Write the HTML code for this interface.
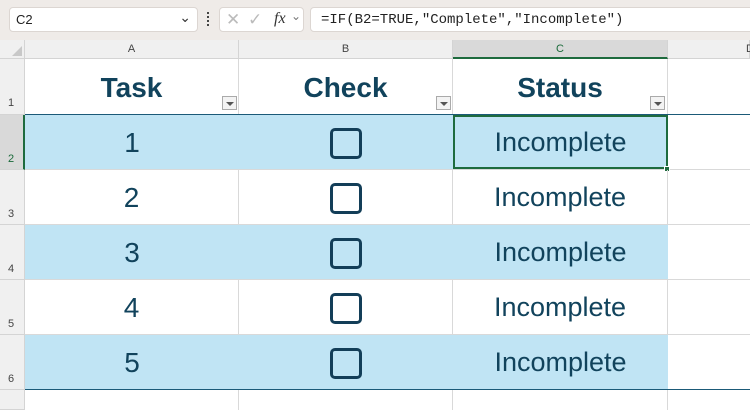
<!DOCTYPE html>
<html><head><style>
*{margin:0;padding:0;box-sizing:border-box}
body{width:750px;height:400px;overflow:hidden;background:#fff;font-family:"Liberation Sans",sans-serif;position:relative}
.top{position:absolute;left:0;top:0;width:750px;height:40px;background:#efebe8}
.box{position:absolute;background:#fff;border:1px solid #dcd6d2;border-radius:4px;height:25px;top:7px}
.abs{position:absolute}
.ch{position:absolute;top:40px;height:19px;background:#f0f0f0;border-right:1px solid #d4d4d4;border-bottom:1px solid #d4d4d4;font-size:11px;color:#444;text-align:center;line-height:19px}
.rh{position:absolute;left:0;width:25px;background:#f0f0f0;border-bottom:1px solid #d4d4d4;border-right:1px solid #d4d4d4;font-size:11px;color:#444;padding-left:8px}
.row{position:absolute;left:25px;width:725px;border-bottom:1px solid #d9d9d9}
.cell{position:absolute;top:0;height:100%;border-right:1px solid #d9d9d9;text-align:center;color:#11435c}
.cb{position:absolute;left:330px;width:32px;height:31px;border:3px solid #133e58;border-radius:5px}
.dd{position:absolute;width:15px;height:14px;border:1px solid #aaa;background:#f3f3f3}
.dd:after{content:"";position:absolute;left:3px;top:5px;border-left:4px solid transparent;border-right:4px solid transparent;border-top:4px solid #555}
</style></head><body>
<div class="top"></div>
<div class="box" style="left:9px;width:189px"><span class="abs" style="left:6px;top:4px;font-size:13px;color:#222">C2</span><span class="abs" style="right:6px;top:1px;font-size:14px;color:#333">&#8964;</span></div>
<div class="abs" style="left:207px;top:12px;width:2px;height:14px;border-left:2px dotted #444"></div>
<div class="box" style="left:219px;width:85px"><span class="abs" style="left:6px;top:2px;font-size:17px;color:#bbb">✕</span><span class="abs" style="left:28px;top:2px;font-size:17px;color:#bbb">✓</span><span class="abs" style="left:54px;top:2px;font-size:16px;font-style:italic;font-family:'Liberation Serif',serif;color:#333">fx</span><span class="abs" style="left:71px;top:1px;font-size:12px;color:#777">&#8964;</span></div>
<div class="box" style="left:310px;width:445px"><span class="abs" style="left:10px;top:4px;font-size:14px;font-family:'Liberation Mono',monospace;color:#222">=IF(B2=TRUE,"Complete","Incomplete")</span></div>

<div class="ch" style="left:0;width:25px"></div>
<div class="abs" style="left:12px;top:46px;border-left:10px solid transparent;border-bottom:10px solid #c8c8c8"></div>
<div class="ch" style="left:25px;width:214px">A</div>
<div class="ch" style="left:239px;width:214px">B</div>
<div class="ch" style="left:453px;width:215px;background:#d9d9d9;color:#1a6a3a;border-bottom:2px solid #1e6b3e">C</div>
<div class="ch" style="left:668px;width:82px;text-align:left;padding-left:78px">D</div>

<div class="rh" style="top:59px;height:56px;padding-top:38px">1</div>
<div class="rh" style="top:115px;height:55px;padding-top:38px;background:#d9d9d9;color:#1a6a3a;border-right:2px solid #1e6b3e">2</div>
<div class="rh" style="top:170px;height:55px;padding-top:38px">3</div>
<div class="rh" style="top:225px;height:55px;padding-top:38px">4</div>
<div class="rh" style="top:280px;height:55px;padding-top:38px">5</div>
<div class="rh" style="top:335px;height:55px;padding-top:38px">6</div>
<div class="rh" style="top:390px;height:20px"></div>

<div class="row" style="top:59px;height:56px;border-bottom:1px solid #1b5a78">
<div class="cell" style="left:0;width:214px;font-weight:bold;font-size:28px;line-height:58px">Task</div>
<div class="cell" style="left:214px;width:214px;font-weight:bold;font-size:28px;line-height:58px">Check</div>
<div class="cell" style="left:428px;width:215px;font-weight:bold;font-size:28px;line-height:58px">Status</div>
<div class="dd" style="left:197px;top:37px"></div><div class="dd" style="left:411px;top:37px"></div><div class="dd" style="left:625px;top:37px"></div>
</div>

<div class="row" style="top:115px;height:55px"><div class="cell" style="left:0;width:643px;background:#c0e4f4;border:none"></div><div class="cell" style="left:0;width:214px;font-size:28px;line-height:55px;border:none">1</div><div class="cell" style="left:428px;width:215px;font-size:27px;line-height:55px;border:2px solid #1e6b3e;line-height:51px">Incomplete</div><div class="abs" style="left:639px;top:51px;width:6px;height:6px;background:#1e6b3e;border:1px solid #fff"></div></div>
<div class="row" style="top:170px;height:55px"><div class="cell" style="left:0;width:214px;font-size:28px;line-height:55px">2</div><div class="cell" style="left:214px;width:214px"></div><div class="cell" style="left:428px;width:215px;font-size:27px;line-height:55px">Incomplete</div></div>
<div class="row" style="top:225px;height:55px"><div class="cell" style="left:0;width:643px;background:#c0e4f4;border:none"></div><div class="cell" style="left:0;width:214px;font-size:28px;line-height:55px;border:none">3</div><div class="cell" style="left:428px;width:215px;font-size:27px;line-height:55px;border:none">Incomplete</div></div>
<div class="row" style="top:280px;height:55px"><div class="cell" style="left:0;width:214px;font-size:28px;line-height:55px">4</div><div class="cell" style="left:214px;width:214px"></div><div class="cell" style="left:428px;width:215px;font-size:27px;line-height:55px">Incomplete</div></div>
<div class="row" style="top:335px;height:55px;border-bottom:1px solid #1b5a78"><div class="cell" style="left:0;width:643px;background:#c0e4f4;border:none"></div><div class="cell" style="left:0;width:214px;font-size:28px;line-height:55px;border:none">5</div><div class="cell" style="left:428px;width:215px;font-size:27px;line-height:55px;border:none">Incomplete</div></div>
<div class="row" style="top:390px;height:20px;border:none"><div class="cell" style="left:0;width:214px"></div><div class="cell" style="left:214px;width:214px"></div><div class="cell" style="left:428px;width:215px"></div></div>

<div class="cb" style="top:128px"></div>
<div class="cb" style="top:183px"></div>
<div class="cb" style="top:238px"></div>
<div class="cb" style="top:293px"></div>
<div class="cb" style="top:348px"></div>
</body></html>
